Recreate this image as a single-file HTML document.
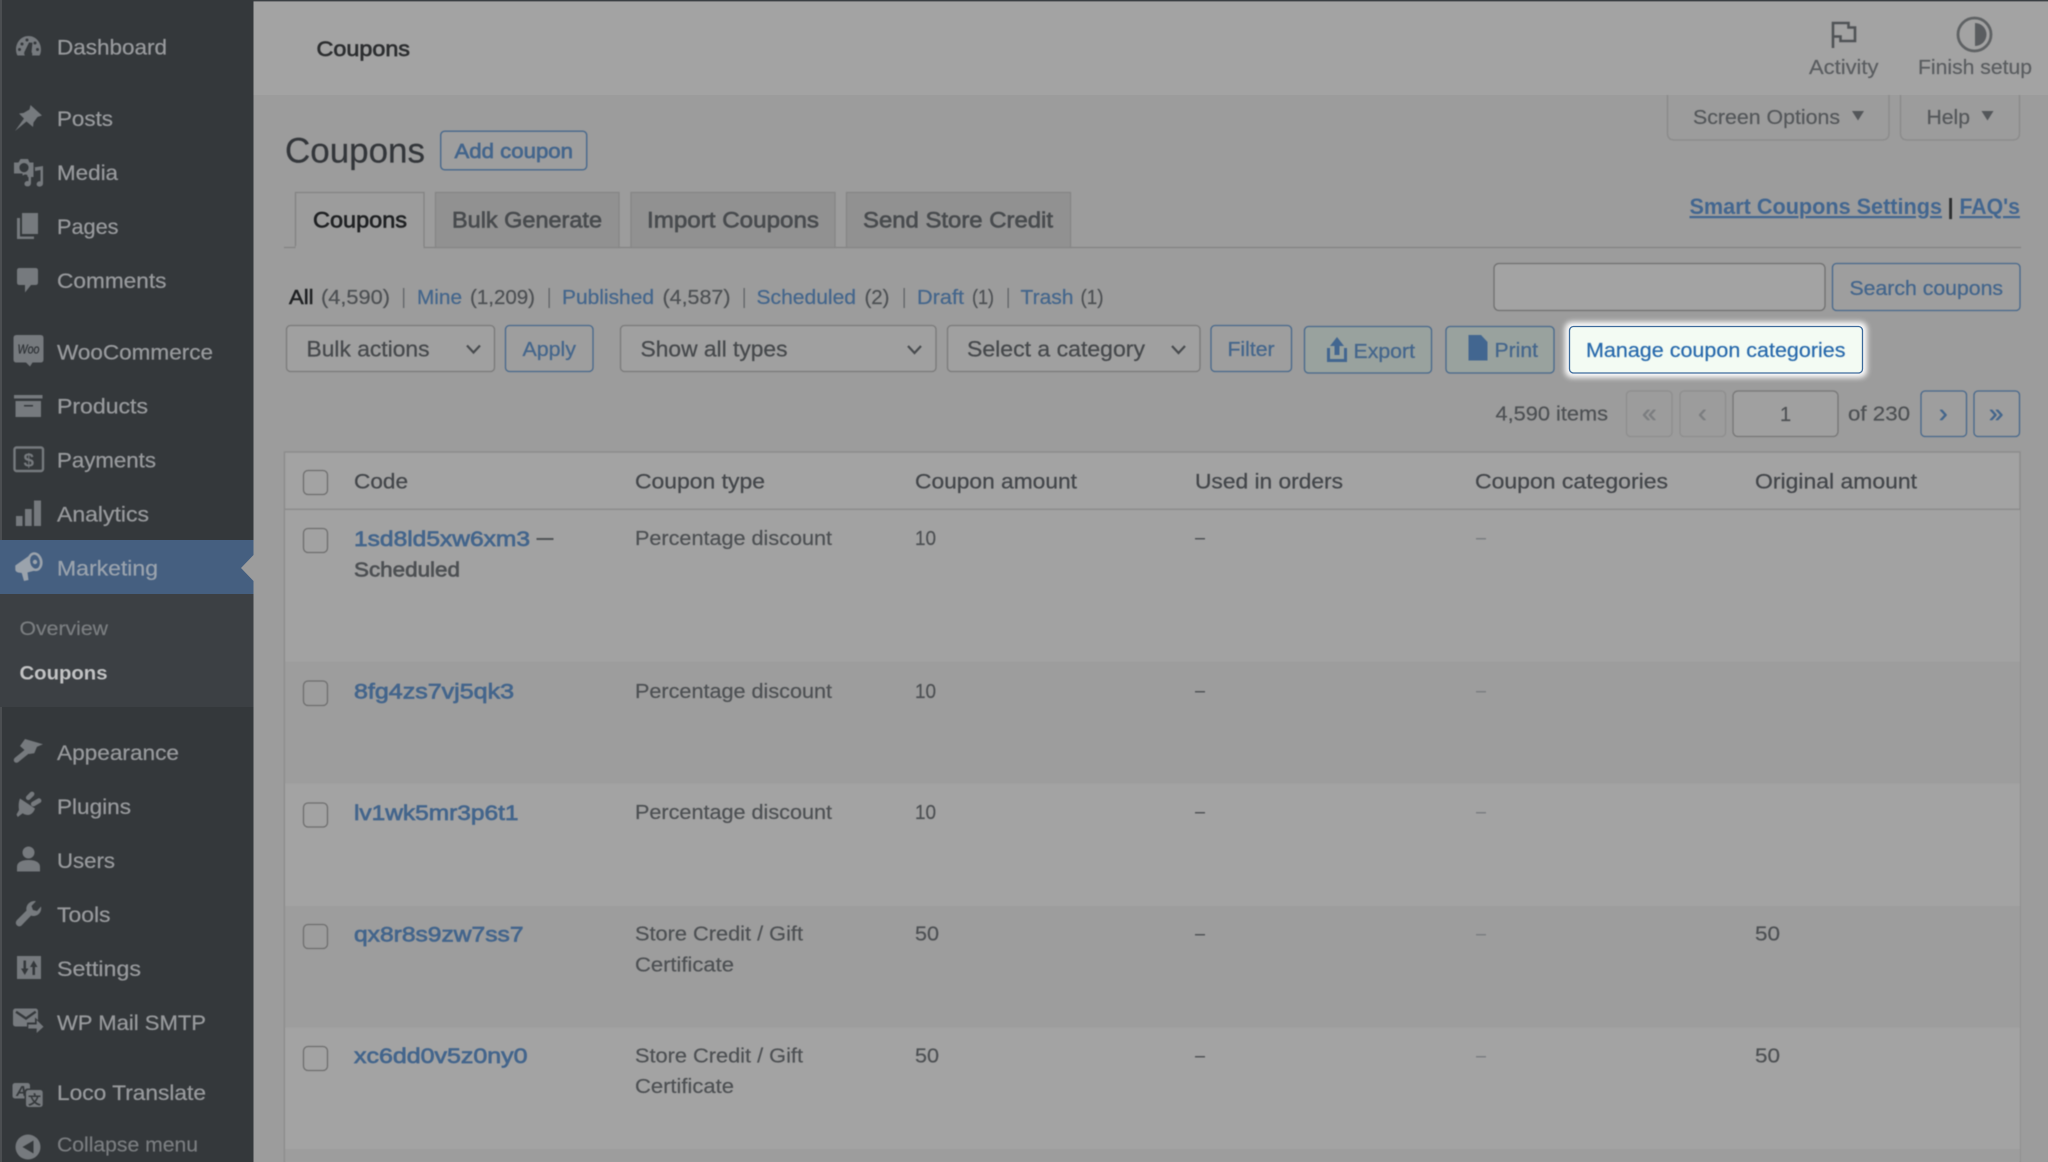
<!DOCTYPE html>
<html lang="en"><head><meta charset="utf-8"><title>Coupons</title>
<style>
html,body{margin:0;padding:0;width:2048px;height:1162px;overflow:hidden;background:#9c9c9c}
svg{display:block;position:absolute;left:0;top:0}
text{font-family:"Liberation Sans",sans-serif;white-space:pre}
.m{font-size:21.5px;fill:#989a9d;stroke:#989a9d;stroke-width:.25}
.t{font-size:20px;fill:#4d5053;stroke:#4d5053;stroke-width:.2}
.h{font-size:21px;fill:#43464a;stroke:#43464a;stroke-width:.25}
.l{font-size:20px;fill:#44668c;stroke:#44668c;stroke-width:.25}
.c{font-size:21.5px;fill:#43658c;stroke:#43658c;stroke-width:.7}
.b{font-size:20.5px;fill:#44668c;stroke:#44668c;stroke-width:.3}
.s{font-size:22px;fill:#46494c;stroke:#46494c;stroke-width:.25}
.tab{font-size:22.5px;fill:#484b4e;stroke:#484b4e;stroke-width:.65}
.i{fill:#767a7e}
.g{filter:blur(.45px)}
</style></head><body>
<svg width="2048" height="1162" viewBox="0 0 2048 1162" xmlns="http://www.w3.org/2000/svg">
<!-- backgrounds -->
<rect x="0" y="0" width="2048" height="1162" fill="#9c9c9c"/>
<rect x="253" y="1" width="1795" height="94" fill="#a3a3a3"/>
<rect x="253" y="0" width="1795" height="1.4" fill="#3b3f43"/>
<rect x="0" y="0" width="253.5" height="1162" fill="#34383b"/>
<rect x="0" y="0" width="2" height="1162" fill="#4b4e51"/>
<rect x="0" y="540" width="253.5" height="54" fill="#455f80"/>
<rect x="0" y="594" width="253.5" height="113" fill="#3c4044"/>
<path d="M253.5 555L241 568L253.5 581Z" fill="#9c9c9c"/>

<g class="g">
<!-- sidebar icons -->
<!-- dashboard -->
<path class="i" fill-rule="evenodd" d="M28.500 36C21 36 16 42.500 16 49.500C16 52 16.500 54 17.500 55.500L25 55.500C24.200 54.700 24 53.500 24.300 52.300L29 42.500L32.500 42.800L31.500 52C32.300 53 32.500 54.500 32 55.500L39.500 55.500C40.500 54 41 52 41 49.500C41 42.500 36 36 28.500 36Z"/>
<circle cx="22" cy="44" r="1.500" fill="#34383b"/><circle cx="19.500" cy="49.500" r="1.500" fill="#34383b"/><circle cx="27" cy="40" r="1.500" fill="#34383b"/><circle cx="35" cy="43" r="1.500" fill="#34383b"/><circle cx="37.500" cy="49.500" r="1.500" fill="#34383b"/>
<!-- posts pin -->
<path class="i" d="M30.500 105L42 115.500L37.500 117L33.500 122.500L33 127L26.500 121.500L15 131L24 118.500L19 113.500L23.500 113L29.500 109.500Z"/>
<!-- media -->
<path class="i" fill-rule="evenodd" d="M20.500 159H28L29.500 162.500H33.500V177H27.500C28 175.500 27 174.300 25 174.500L22.500 175.500V173.500H14V162.500H18.500ZM24 163A4.600 4.600 0 1 0 24 172.200A4.600 4.600 0 1 0 24 163Z"/>
<path class="i" d="M33.500 167.500L43 166V183.500C43 186 40.500 187 38.500 186.500C36 185.800 36 182.500 38.500 181.500C39.200 181.200 39.800 181.200 40.500 181.500V170L35 171V167.500Z"/>
<path class="i" d="M31 176V183C31 185.800 28.500 186.800 26.500 186.300C23.800 185.500 23.800 182.200 26.300 181.200C27 181 27.700 181 28.500 181.300V176Z"/>
<!-- pages -->
<rect class="i" x="22" y="213" width="16" height="21"/>
<path class="i" d="M17 218H20V236.500H34V239H17Z"/>
<!-- comments -->
<path class="i" d="M19.500 268H35.500Q38 268 38 270.500V282.500Q38 285 35.500 285H31L25 292.500V285H19.500Q17 285 17 282.500V270.500Q17 268 19.500 268Z"/>
<!-- woo -->
<path class="i" d="M16.500 335H40.500Q43.500 335 43.500 338V359.500Q43.500 362.500 40.500 362.500H32.500L30 366.500L26 362.500H16.500Q13.500 362.500 13.500 359.500V338Q13.500 335 16.500 335Z"/>
<text x="17.500" y="353.500" font-size="13" font-style="italic" fill="#2b2f33" stroke="#2b2f33" stroke-width=".2" textLength="22" lengthAdjust="spacingAndGlyphs">Woo</text>
<!-- products -->
<rect class="i" x="14" y="395" width="28.500" height="3.500"/>
<path class="i" fill-rule="evenodd" d="M15.500 401H41V417H15.500ZM24 405V406.500H33V405Z"/>
<!-- payments -->
<rect x="14.500" y="447.500" width="28.500" height="23.500" rx="2" fill="none" stroke="#767a7e" stroke-width="2.400"/>
<text x="23.500" y="466.500" font-size="18" font-weight="700" fill="#767a7e" textLength="10.500" lengthAdjust="spacingAndGlyphs">$</text>
<!-- analytics -->
<rect class="i" x="16" y="516" width="6.500" height="10"/><rect class="i" x="25" y="509" width="6.700" height="17"/><rect class="i" x="34" y="500.500" width="7" height="25.500"/>
<!-- marketing -->
<path d="M15.300 565.500L33 553L37 570L27.500 572.500L28.500 580L24 581L21.700 573L18 572.500Q15 571.500 15.300 569Z" fill="#9ba3ac"/>
<ellipse cx="35" cy="561.700" rx="7.500" ry="9.500" fill="#9ba3ac" transform="rotate(-12 35 561.700)"/>
<ellipse cx="35" cy="561.700" rx="4.800" ry="7" fill="#455f80" transform="rotate(-12 35 561.700)"/>
<circle cx="35" cy="562" r="2.200" fill="#9ba3ac"/>
<!-- appearance -->
<path class="i" d="M20 746L25 739L43 744.300L37 746.700L34.300 753.300L29 754Z"/>
<path d="M27 751.500L16.500 760" stroke="#767a7e" stroke-width="5.500" stroke-linecap="round" fill="none"/>
<!-- plugins -->
<path class="i" d="M20 798.500L35 808.500C34 812 31 815 28 815C26 815 24 814.500 22.700 813.300L17.700 817L16.500 814.500L19 810C18.500 806 18.500 802 20 798.500Z"/>
<path d="M28.300 797.700L32 794M33.300 804L39 800.700" stroke="#767a7e" stroke-width="4.800" stroke-linecap="round" fill="none"/>
<!-- users -->
<circle class="i" cx="28.500" cy="852.500" r="6"/>
<path class="i" d="M17 867C17 861.500 23 860 28.500 860C34 860 40 861.500 40 867V871.500H17Z"/>
<!-- tools -->
<path class="i" d="M41 906.500C42 911 39 916 33.500 916C32.500 916 31.500 915.800 31 915.600L21.500 925.500C20 927 17 926.500 16 924C15.500 922.500 16 921 17 920L26.500 910.500C25.500 905.500 29.500 901 34.500 901L36 901.200L31.500 906L33 910L37 911Z"/>
<!-- settings -->
<path class="i" fill-rule="evenodd" d="M17 956H41V979H17ZM23.500 960.500V968.500H21L24.800 975L28.500 968.500H26V960.500ZM32.500 975V967H30L33.700 960.500L37.500 967H35V975Z"/>
<!-- smtp -->
<rect class="i" x="13" y="1008.500" width="25" height="18" rx="2.500"/>
<path d="M16 1011.700L26 1018.500L35.700 1011.700" fill="none" stroke="#34383b" stroke-width="2.400"/>
<path d="M27 1022.500H35V1017.500L45.500 1026.700L35 1035.500V1030H27Z" fill="#34383b"/>
<path class="i" d="M28.300 1024.500H36.700V1020L43.500 1026.700L36.700 1033V1028.500H28.300Z"/>
<!-- loco -->
<rect class="i" x="12.500" y="1083" width="17.500" height="15.500" rx="2.500"/>
<text x="16" y="1096" font-size="15" font-style="italic" font-weight="700" fill="#34383b">A</text>
<rect x="24.500" y="1088.500" width="20" height="20" rx="3" fill="#34383b"/>
<rect class="i" x="26" y="1090" width="16.700" height="17" rx="2.500"/>
<text x="28" y="1104.500" font-size="13" font-family="'Noto Sans CJK SC',sans-serif" font-weight="700" fill="#34383b" style="font-family:'Noto Sans CJK SC',sans-serif">文</text>
<!-- collapse -->
<circle class="i" cx="28" cy="1147" r="12.500"/>
<path d="M33.500 1140.500V1153.500L22.500 1147Z" fill="#34383b"/>

<!-- sidebar text -->
<text class="m" x="57" y="54.500" textLength="110" lengthAdjust="spacingAndGlyphs">Dashboard</text>
<text class="m" x="57" y="126" textLength="56" lengthAdjust="spacingAndGlyphs">Posts</text>
<text class="m" x="57" y="180" textLength="61" lengthAdjust="spacingAndGlyphs">Media</text>
<text class="m" x="57" y="234" textLength="61.500" lengthAdjust="spacingAndGlyphs">Pages</text>
<text class="m" x="57" y="288" textLength="109.500" lengthAdjust="spacingAndGlyphs">Comments</text>
<text class="m" x="57" y="359.500" textLength="156" lengthAdjust="spacingAndGlyphs">WooCommerce</text>
<text class="m" x="57" y="413.500" textLength="91" lengthAdjust="spacingAndGlyphs">Products</text>
<text class="m" x="57" y="467.500" textLength="99" lengthAdjust="spacingAndGlyphs">Payments</text>
<text class="m" x="57" y="521.500" textLength="92" lengthAdjust="spacingAndGlyphs">Analytics</text>
<text class="m" x="57" y="575.500" textLength="101" lengthAdjust="spacingAndGlyphs" style="fill:#9aa3ad;stroke:#9aa3ad">Marketing</text>
<text x="19.500" y="635" font-size="19.500" fill="#7b7e81" stroke="#7b7e81" stroke-width=".2" textLength="88.500" lengthAdjust="spacingAndGlyphs">Overview</text>
<text x="19.500" y="679.500" font-size="19.500" font-weight="700" fill="#c2c3c4" textLength="88" lengthAdjust="spacingAndGlyphs">Coupons</text>
<text class="m" x="57" y="760" textLength="122" lengthAdjust="spacingAndGlyphs">Appearance</text>
<text class="m" x="57" y="814" textLength="74" lengthAdjust="spacingAndGlyphs">Plugins</text>
<text class="m" x="57" y="868" textLength="58" lengthAdjust="spacingAndGlyphs">Users</text>
<text class="m" x="57" y="922" textLength="53.500" lengthAdjust="spacingAndGlyphs">Tools</text>
<text class="m" x="57" y="976" textLength="84" lengthAdjust="spacingAndGlyphs">Settings</text>
<text class="m" x="57" y="1030" textLength="149" lengthAdjust="spacingAndGlyphs">WP Mail SMTP</text>
<text class="m" x="57" y="1100" textLength="149" lengthAdjust="spacingAndGlyphs">Loco Translate</text>
<text x="57" y="1151.500" font-size="20.500" fill="#7b7e81" stroke="#7b7e81" stroke-width=".2" textLength="141" lengthAdjust="spacingAndGlyphs">Collapse menu</text>

<!-- top bar -->
<text x="316.500" y="56" font-size="21.500" fill="#2c2e30" stroke="#2c2e30" stroke-width=".65" textLength="93.500" lengthAdjust="spacingAndGlyphs">Coupons</text>
<path d="M1833 48V23H1848.500V27.500H1855V41H1840.500V36.500H1833" fill="none" stroke="#505356" stroke-width="2.600"/>
<text x="1809" y="74" font-size="20.500" fill="#5a5d60" stroke="#5a5d60" stroke-width=".2" textLength="69.500" lengthAdjust="spacingAndGlyphs">Activity</text>
<circle cx="1974.500" cy="34.500" r="16.500" fill="none" stroke="#5f6264" stroke-width="2.800"/>
<path d="M1975 23A11.500 11.500 0 0 1 1975 46Z" fill="#5a5d60"/>
<text x="1918" y="74" font-size="20.500" fill="#5a5d60" stroke="#5a5d60" stroke-width=".2" textLength="114" lengthAdjust="spacingAndGlyphs">Finish setup</text>

<!-- screen meta -->
<path d="M1667.500 95V133Q1667.500 140 1674.500 140H1882Q1889 140 1889 133V95" fill="none" stroke="#8a8a8a" stroke-width="1.300"/>
<path d="M1900.500 95V133Q1900.500 140 1907.500 140H2012.500Q2019.500 140 2019.500 133V95" fill="none" stroke="#8a8a8a" stroke-width="1.300"/>
<text x="1693" y="124" font-size="20.500" fill="#54575a" stroke="#54575a" stroke-width=".2" textLength="147" lengthAdjust="spacingAndGlyphs">Screen Options</text>
<path d="M1852 111H1864L1858 120.500Z" fill="#54575a"/>
<text x="1926.500" y="124" font-size="20.500" fill="#54575a" stroke="#54575a" stroke-width=".2" textLength="43.500" lengthAdjust="spacingAndGlyphs">Help</text>
<path d="M1981.500 111H1993.500L1987.500 120.500Z" fill="#54575a"/>

<!-- heading -->
<text x="285" y="162.500" font-size="35px" fill="#33363a" stroke="#33363a" stroke-width=".2" textLength="140" lengthAdjust="spacingAndGlyphs">Coupons</text>
<rect x="440.700" y="131.200" width="146" height="38.600" rx="4" fill="#9e9e9e" stroke="#47688c" stroke-width="1.400"/>
<text x="454.500" y="158" font-size="20.500" fill="#43658c" stroke="#43658c" stroke-width=".65" textLength="118.500" lengthAdjust="spacingAndGlyphs">Add coupon</text>

<!-- tabs -->
<line x1="284" y1="247.500" x2="2021" y2="247.500" stroke="#838383" stroke-width="1.300"/>
<path d="M295.500 248V192.500H424V248" fill="#9c9c9c" stroke="#838383" stroke-width="1.300"/>
<rect x="295.500" y="246" width="128" height="3" fill="#9c9c9c"/>
<rect x="435.500" y="192.500" width="183.500" height="55" fill="#919191" stroke="#868686" stroke-width="1.300"/>
<rect x="631" y="192.500" width="204" height="55" fill="#919191" stroke="#868686" stroke-width="1.300"/>
<rect x="846.500" y="192.500" width="224" height="55" fill="#919191" stroke="#868686" stroke-width="1.300"/>
<text class="tab" x="313" y="227.500" textLength="94" lengthAdjust="spacingAndGlyphs" style="fill:#1f2123;stroke:#1f2123">Coupons</text>
<text class="tab" x="452" y="227.500" textLength="150" lengthAdjust="spacingAndGlyphs">Bulk Generate</text>
<text class="tab" x="647" y="227.500" textLength="172" lengthAdjust="spacingAndGlyphs">Import Coupons</text>
<text class="tab" x="863" y="227.500" textLength="190" lengthAdjust="spacingAndGlyphs">Send Store Credit</text>
<!-- settings link -->
<text x="1689.500" y="214" font-size="22px" font-weight="700" fill="#426690" text-decoration="underline" textLength="252.500" lengthAdjust="spacingAndGlyphs">Smart Coupons Settings</text>
<text x="1947.500" y="214" font-size="22px" fill="#2c2e30" font-weight="700">|</text>
<text x="1959.500" y="214" font-size="22px" font-weight="700" fill="#426690" text-decoration="underline" textLength="60.500" lengthAdjust="spacingAndGlyphs">FAQ's</text>

<!-- status list -->
<text x="289" y="304" font-size="20px" fill="#1f2123" stroke="#1f2123" stroke-width=".5" textLength="24.500" lengthAdjust="spacingAndGlyphs">All</text>
<text class="t" x="321" y="304" textLength="69" lengthAdjust="spacingAndGlyphs">(4,590)</text>
<rect x="403" y="288" width="1.300" height="20" fill="#606366"/>
<text class="l" x="417" y="304" textLength="45" lengthAdjust="spacingAndGlyphs">Mine</text>
<text class="t" x="470" y="304" textLength="65" lengthAdjust="spacingAndGlyphs">(1,209)</text>
<rect x="548.500" y="288" width="1.300" height="20" fill="#606366"/>
<text class="l" x="562" y="304" textLength="92" lengthAdjust="spacingAndGlyphs">Published</text>
<text class="t" x="662.500" y="304" textLength="68" lengthAdjust="spacingAndGlyphs">(4,587)</text>
<rect x="743.500" y="288" width="1.300" height="20" fill="#606366"/>
<text class="l" x="756.500" y="304" textLength="99.500" lengthAdjust="spacingAndGlyphs">Scheduled</text>
<text class="t" x="864.500" y="304" textLength="25" lengthAdjust="spacingAndGlyphs">(2)</text>
<rect x="903.500" y="288" width="1.300" height="20" fill="#606366"/>
<text class="l" x="917" y="304" textLength="47" lengthAdjust="spacingAndGlyphs">Draft</text>
<text class="t" x="972" y="304" textLength="22" lengthAdjust="spacingAndGlyphs">(1)</text>
<rect x="1007.500" y="288" width="1.300" height="20" fill="#606366"/>
<text class="l" x="1020.500" y="304" textLength="53" lengthAdjust="spacingAndGlyphs">Trash</text>
<text class="t" x="1080.500" y="304" textLength="23" lengthAdjust="spacingAndGlyphs">(1)</text>

<!-- search -->
<rect x="1494" y="263.500" width="331" height="47" rx="5" fill="#a3a3a3" stroke="#707070" stroke-width="1.300"/>
<rect x="1832.500" y="263.500" width="187.500" height="47" rx="4" fill="#9e9e9e" stroke="#47688c" stroke-width="1.300"/>
<text class="b" x="1849.500" y="295" textLength="153.500" lengthAdjust="spacingAndGlyphs">Search coupons</text>

<!-- filters -->
<rect x="286.500" y="325.500" width="208" height="46" rx="4" fill="#a0a0a0" stroke="#7a7a7a" stroke-width="1.300"/>
<text class="s" x="306.500" y="356.500" textLength="123" lengthAdjust="spacingAndGlyphs">Bulk actions</text>
<path d="M467 345.500L473.500 352.500L480 345.500" fill="none" stroke="#484b4e" stroke-width="2.200"/>
<rect x="505.500" y="325.500" width="87.500" height="46" rx="4" fill="#9e9e9e" stroke="#47688c" stroke-width="1.300"/>
<text class="b" x="522.500" y="356" textLength="53.500" lengthAdjust="spacingAndGlyphs">Apply</text>
<rect x="620.500" y="325.500" width="315.500" height="46" rx="4" fill="#a0a0a0" stroke="#7a7a7a" stroke-width="1.300"/>
<text class="s" x="640.500" y="356.500" textLength="147" lengthAdjust="spacingAndGlyphs">Show all types</text>
<path d="M908 346L914.500 353L921 346" fill="none" stroke="#484b4e" stroke-width="2.200"/>
<rect x="947.500" y="325.500" width="252.500" height="46" rx="4" fill="#a0a0a0" stroke="#7a7a7a" stroke-width="1.300"/>
<text class="s" x="967" y="356.500" textLength="178" lengthAdjust="spacingAndGlyphs">Select a category</text>
<path d="M1172 346L1178.500 353L1185 346" fill="none" stroke="#484b4e" stroke-width="2.200"/>
<rect x="1211" y="325.500" width="80.500" height="46" rx="4" fill="#9e9e9e" stroke="#47688c" stroke-width="1.300"/>
<text class="b" x="1227.500" y="356" textLength="47" lengthAdjust="spacingAndGlyphs">Filter</text>
<rect x="1304.500" y="326.500" width="127" height="46.500" rx="4" fill="#99a29e" stroke="#47688c" stroke-width="1.300"/>
<path d="M1337 337L1344 346H1339.500V355H1334.500V346H1330Z" fill="#426690"/>
<path d="M1328.500 348V360.500H1345.500V348" fill="none" stroke="#426690" stroke-width="3"/>
<text class="b" x="1353.500" y="358" textLength="61.500" lengthAdjust="spacingAndGlyphs">Export</text>
<rect x="1446" y="326.500" width="108" height="46.500" rx="4" fill="#99a29e" stroke="#47688c" stroke-width="1.300"/>
<path d="M1468.500 335H1481L1487.500 342V360.500H1468.500Z" fill="#426690"/>
<text class="b" x="1494.500" y="357" textLength="43.500" lengthAdjust="spacingAndGlyphs">Print</text>
</g>

<!-- highlighted button -->
<rect x="1565" y="322" width="302" height="55.500" rx="7" fill="#fff" style="filter:blur(3px)"/>
<rect x="1569.500" y="326.500" width="293" height="46.500" rx="4" fill="#f3fbf3" stroke="#3c6a9b" stroke-width="1.300"/>
<text class="g" x="1586" y="357" font-size="20.500" fill="#2668ab" stroke="#2668ab" stroke-width=".2" textLength="259.500" lengthAdjust="spacingAndGlyphs">Manage coupon categories</text>

<g class="g">
<!-- pagination -->
<text class="t" x="1495.500" y="420.500" textLength="112.500" lengthAdjust="spacingAndGlyphs">4,590 items</text>
<rect x="1626.500" y="391" width="45.500" height="45.500" rx="4" fill="#9c9c9c" stroke="#8e8e8e" stroke-width="1.300"/>
<text x="1642" y="422" font-size="26px" fill="#7c7e80" stroke="#7c7e80" stroke-width=".5">«</text>
<rect x="1680" y="391" width="45.500" height="45.500" rx="4" fill="#9c9c9c" stroke="#8e8e8e" stroke-width="1.300"/>
<text x="1698" y="422" font-size="26px" fill="#7c7e80" stroke="#7c7e80" stroke-width=".5">‹</text>
<rect x="1733" y="391" width="105" height="45.500" rx="5" fill="#a0a0a0" stroke="#777" stroke-width="1.300"/>
<text class="t" x="1780" y="421" font-size="20px">1</text>
<text class="t" x="1848" y="420.500" textLength="62" lengthAdjust="spacingAndGlyphs">of 230</text>
<rect x="1921" y="391" width="45.500" height="45.500" rx="4" fill="#9e9e9e" stroke="#47688c" stroke-width="1.300"/>
<text x="1939" y="422" font-size="26px" fill="#44668c" stroke="#44668c" stroke-width=".5">›</text>
<rect x="1974" y="391" width="45.500" height="45.500" rx="4" fill="#9e9e9e" stroke="#47688c" stroke-width="1.300"/>
<text x="1989" y="422" font-size="26px" fill="#44668c" stroke="#44668c" stroke-width=".5">»</text>

<!-- table -->
<rect x="284.500" y="452" width="1735.500" height="720" fill="#a3a3a3" stroke="#8b8b8b" stroke-width="1.300"/>
<rect x="285" y="509.500" width="1735" height="152" fill="#a2a2a2"/>
<rect x="285" y="661.500" width="1735" height="122" fill="#9d9d9d"/>
<rect x="285" y="783.500" width="1735" height="122.500" fill="#a3a3a3"/>
<rect x="285" y="906" width="1735" height="121.700" fill="#9d9d9d"/>
<rect x="285" y="1027.700" width="1735" height="121.300" fill="#a3a3a3"/>
<rect x="285" y="1149" width="1735" height="13" fill="#9d9d9d"/>
<line x1="285" y1="509.300" x2="2020" y2="509.300" stroke="#8b8b8b" stroke-width="1.300"/>

<!-- checkboxes -->
<g fill="none" stroke="#6e6e6e" stroke-width="1.300">
<rect x="303.500" y="470.500" width="24" height="24" rx="4.500"/>
<rect x="303.500" y="528.500" width="24" height="24" rx="4.500"/>
<rect x="303.500" y="681" width="24" height="24.500" rx="4.500"/>
<rect x="303.500" y="803" width="24" height="24" rx="4.500"/>
<rect x="303.500" y="924.500" width="24" height="24" rx="4.500"/>
<rect x="303.500" y="1046.500" width="24" height="24" rx="4.500"/>
</g>

<!-- table head -->
<text class="h" x="354" y="488.500" textLength="54" lengthAdjust="spacingAndGlyphs">Code</text>
<text class="h" x="635" y="488.500" textLength="130" lengthAdjust="spacingAndGlyphs">Coupon type</text>
<text class="h" x="915" y="488.500" textLength="162" lengthAdjust="spacingAndGlyphs">Coupon amount</text>
<text class="h" x="1195" y="488.500" textLength="148" lengthAdjust="spacingAndGlyphs">Used in orders</text>
<text class="h" x="1475" y="488.500" textLength="193" lengthAdjust="spacingAndGlyphs">Coupon categories</text>
<text class="h" x="1755" y="488.500" textLength="162" lengthAdjust="spacingAndGlyphs">Original amount</text>

<!-- row 1 -->
<text class="c" x="354" y="546" textLength="176" lengthAdjust="spacingAndGlyphs">1sd8ld5xw6xm3</text>
<rect x="536.500" y="538" width="17" height="2" fill="#505356"/>
<text x="354" y="576.500" font-size="20px" fill="#4d5053" stroke="#4d5053" stroke-width=".65" textLength="106" lengthAdjust="spacingAndGlyphs">Scheduled</text>
<text class="t" x="635" y="545" textLength="197" lengthAdjust="spacingAndGlyphs">Percentage discount</text>
<text class="t" x="915" y="545" textLength="21" lengthAdjust="spacingAndGlyphs">10</text>
<rect x="1195" y="538" width="10" height="1.500" fill="#505356"/>
<rect x="1476" y="538" width="10" height="1.500" fill="#7b7e81"/>
<!-- row 2 -->
<text class="c" x="354" y="698.500" textLength="160" lengthAdjust="spacingAndGlyphs">8fg4zs7vj5qk3</text>
<text class="t" x="635" y="698" textLength="197" lengthAdjust="spacingAndGlyphs">Percentage discount</text>
<text class="t" x="915" y="698" textLength="21" lengthAdjust="spacingAndGlyphs">10</text>
<rect x="1195" y="691" width="10" height="1.500" fill="#505356"/>
<rect x="1476" y="691" width="10" height="1.500" fill="#7b7e81"/>
<!-- row 3 -->
<text class="c" x="354" y="820" textLength="164.500" lengthAdjust="spacingAndGlyphs">lv1wk5mr3p6t1</text>
<text class="t" x="635" y="819" textLength="197" lengthAdjust="spacingAndGlyphs">Percentage discount</text>
<text class="t" x="915" y="819" textLength="21" lengthAdjust="spacingAndGlyphs">10</text>
<rect x="1195" y="812" width="10" height="1.500" fill="#505356"/>
<rect x="1476" y="812" width="10" height="1.500" fill="#7b7e81"/>
<!-- row 4 -->
<text class="c" x="354" y="941.500" textLength="169.500" lengthAdjust="spacingAndGlyphs">qx8r8s9zw7ss7</text>
<text class="t" x="635" y="940.500" textLength="168" lengthAdjust="spacingAndGlyphs">Store Credit / Gift</text>
<text class="t" x="635" y="971.500" textLength="99" lengthAdjust="spacingAndGlyphs">Certificate</text>
<text class="t" x="915" y="940.500" textLength="24" lengthAdjust="spacingAndGlyphs">50</text>
<rect x="1195" y="934" width="10" height="1.500" fill="#505356"/>
<rect x="1476" y="934" width="10" height="1.500" fill="#7b7e81"/>
<text class="t" x="1755" y="940.500" textLength="25" lengthAdjust="spacingAndGlyphs">50</text>
<!-- row 5 -->
<text class="c" x="354" y="1063" textLength="173.500" lengthAdjust="spacingAndGlyphs">xc6dd0v5z0ny0</text>
<text class="t" x="635" y="1062.500" textLength="168" lengthAdjust="spacingAndGlyphs">Store Credit / Gift</text>
<text class="t" x="635" y="1093" textLength="99" lengthAdjust="spacingAndGlyphs">Certificate</text>
<text class="t" x="915" y="1062.500" textLength="24" lengthAdjust="spacingAndGlyphs">50</text>
<rect x="1195" y="1056" width="10" height="1.500" fill="#505356"/>
<rect x="1476" y="1056" width="10" height="1.500" fill="#7b7e81"/>
<text class="t" x="1755" y="1062.500" textLength="25" lengthAdjust="spacingAndGlyphs">50</text>
</g>
</svg>
</body></html>
